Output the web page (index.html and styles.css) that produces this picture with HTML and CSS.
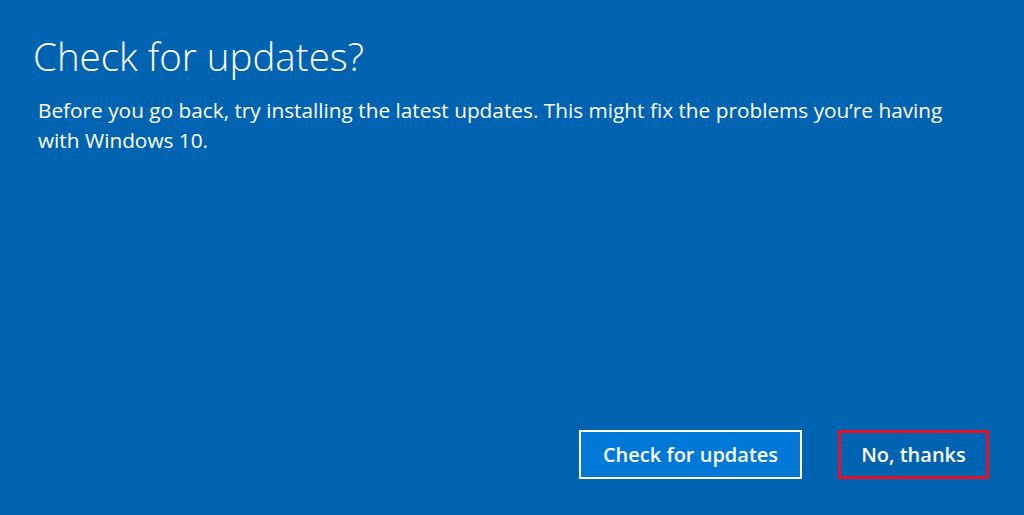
FILE: index.html
```html
<!DOCTYPE html>
<html lang="en">
<head>
    <meta charset="UTF-8">
    <meta name="viewport" content="width=device-width, initial-scale=1.0">
    <title>Check for updates?</title>
    <link rel="stylesheet" href="styles.css">
</head>
<body>
    <div class="screen">
        <div class="content">
            <h1>Check for updates?</h1>
            <p class="message">Before you go back, try installing the latest updates. This might fix the problems you’re having with Windows 10.</p>
        </div>
        <div class="actions">
            <button class="btn btn-primary">Check for updates</button>
            <button class="btn btn-secondary">No, thanks</button>
        </div>
    </div>
</body>
</html>
```

FILE: styles.css
```css
html, body {
    margin: 0;
    height: 100%;
}
body {
    font-family: "Open Sans", "Noto Sans", sans-serif;
    background-color: #0063b1;
    color: #fff;
}
.screen {
    height: 100%;
    display: flex;
    flex-direction: column;
    justify-content: space-between;
    box-sizing: border-box;
    padding: 26px 35px 36px 33px;
}
h1 {
    margin: 0;
    font-size: 38.5px;
    font-weight: 300;
    line-height: 60px;
}
.message {
    margin: 9px 0 0 5px;
    max-width: 925px;
    font-size: 20.8px;
    line-height: 30px;
}
.actions {
    display: flex;
    justify-content: flex-end;
    gap: 36px;
}
.btn {
    font-family: inherit;
    font-size: 20px;
    font-weight: 600;
    color: #fff;
    height: 49px;
    padding: 0;
    white-space: nowrap;
    cursor: pointer;
}
.btn-primary {
    width: 223px;
    background-color: #0078d7;
    border: 2px solid #fff;
}
.btn-secondary {
    width: 151px;
    background-color: #0063b1;
    border: 3px solid #e81123;
}
```
